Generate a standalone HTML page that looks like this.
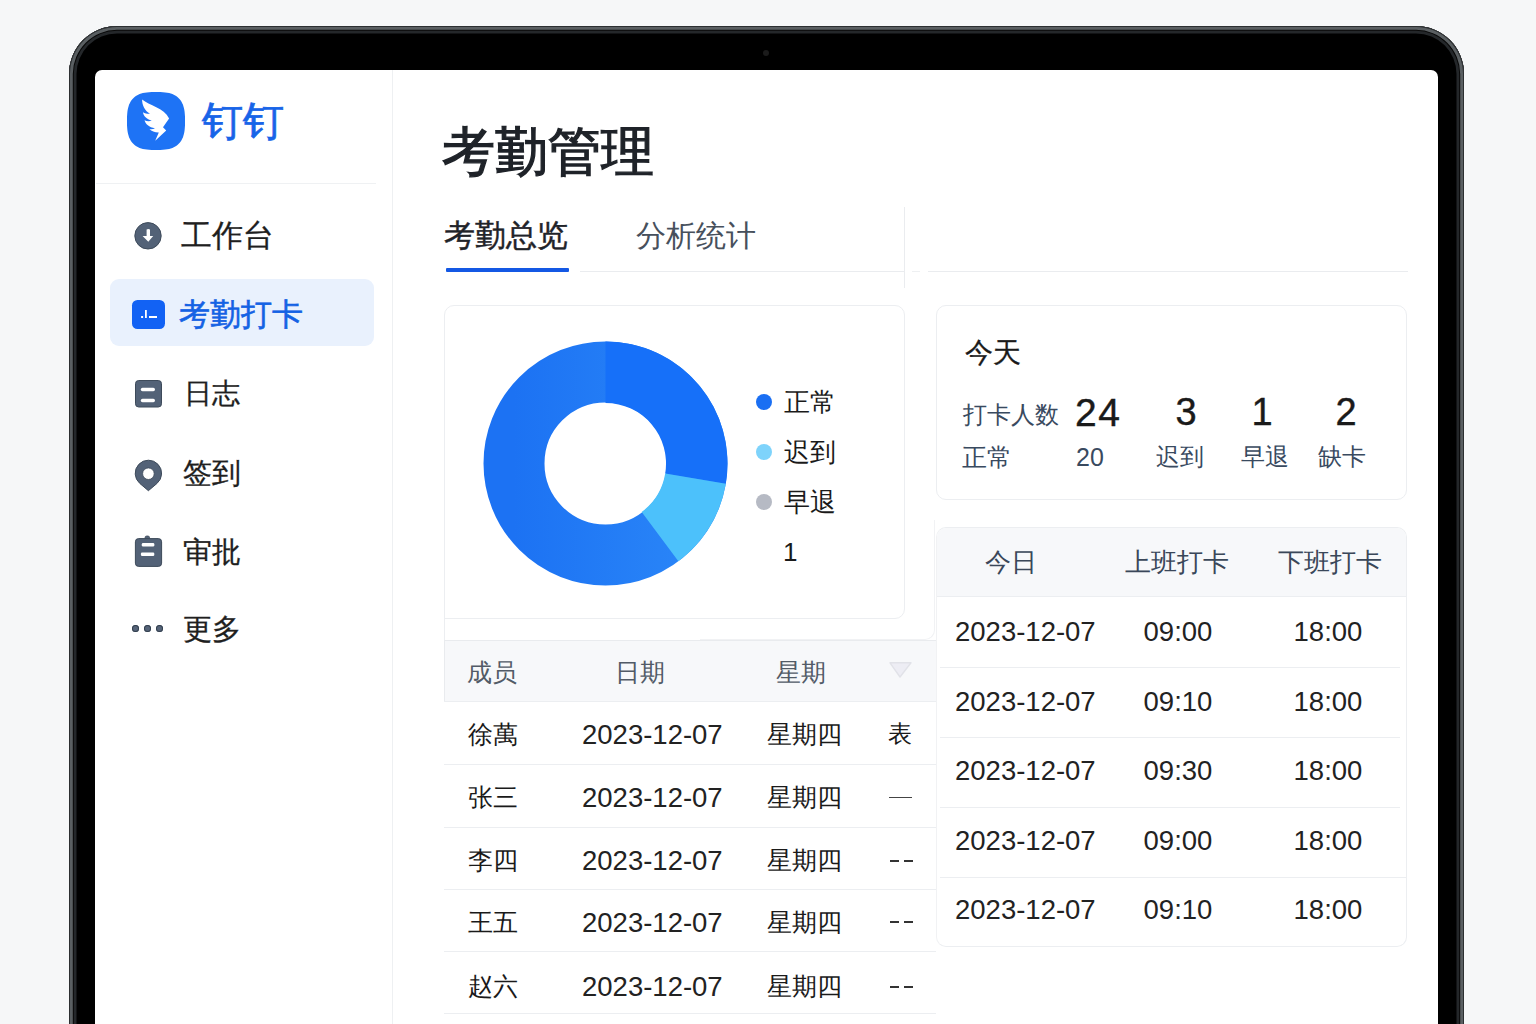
<!DOCTYPE html>
<html><head><meta charset="utf-8">
<style>
html,body{margin:0;padding:0;}
body{width:1536px;height:1024px;overflow:hidden;background:#f6f7f8;position:relative;font-family:"Liberation Sans",sans-serif;color:#1f2329;}
.abs{position:absolute;}
.t{position:absolute;white-space:nowrap;line-height:40px;height:40px;}
.c{text-align:center;width:200px;}
#bezel{left:68.6px;top:26.2px;width:1395.8px;height:1100px;border-radius:48px;background:#000;box-shadow:inset 0 0 0 1px #2c2f31,inset 0 0 0 3.8px #5a5f62,inset 0 0 0 4.8px #080808,inset 0 0 0 7.5px #24272a;}
#screen{left:94.5px;top:70px;width:1343.5px;height:1000px;border-radius:7px 7px 0 0;background:#fff;overflow:hidden;}
#cam{left:763px;top:50px;width:6px;height:6px;border-radius:3px;background:#1b1b1b;}
.line{position:absolute;background:#eceef1;}
.card{position:absolute;border:1px solid #eceef1;border-radius:10px;background:#fff;box-sizing:border-box;}
.nav{font-size:31px;color:#1f1f1f;-webkit-text-stroke:0.3px currentColor}
.hd{font-size:25px;color:#525b67;}
.cell{font-size:27.5px;color:#222;margin-top:1px}
.cj{font-size:25px;color:#1a1a1a;}
</style></head><body>
<div id="bezel" class="abs"></div>
<div id="cam" class="abs"></div>
<div id="screen" class="abs"></div>

<!-- sidebar -->
<div class="line" style="left:392px;top:70px;width:1px;height:954px;background:#eef0f2"></div>
<div class="line" style="left:96px;top:183px;width:280px;height:1px;background:#eff1f3"></div>
<svg class="abs" style="left:127px;top:92px" width="58" height="58" viewBox="0 0 58 58">
<path d="M58.0 29.0 L58.0 33.3 L57.8 35.9 L57.6 38.2 L57.3 40.2 L56.9 42.1 L56.4 43.8 L55.9 45.4 L55.2 46.8 L54.5 48.2 L53.7 49.5 L52.7 50.7 L51.7 51.7 L50.7 52.7 L49.5 53.7 L48.2 54.5 L46.8 55.2 L45.4 55.9 L43.8 56.4 L42.1 56.9 L40.2 57.3 L38.2 57.6 L35.9 57.8 L33.3 58.0 L29.0 58.0 L24.7 58.0 L22.1 57.8 L19.8 57.6 L17.8 57.3 L15.9 56.9 L14.2 56.4 L12.6 55.9 L11.2 55.2 L9.8 54.5 L8.5 53.7 L7.3 52.7 L6.3 51.7 L5.3 50.7 L4.3 49.5 L3.5 48.2 L2.8 46.8 L2.1 45.4 L1.6 43.8 L1.1 42.1 L0.7 40.2 L0.4 38.2 L0.2 35.9 L0.0 33.3 L0.0 29.0 L0.0 24.7 L0.2 22.1 L0.4 19.8 L0.7 17.8 L1.1 15.9 L1.6 14.2 L2.1 12.6 L2.8 11.2 L3.5 9.8 L4.3 8.5 L5.3 7.3 L6.3 6.3 L7.3 5.3 L8.5 4.3 L9.8 3.5 L11.2 2.8 L12.6 2.1 L14.2 1.6 L15.9 1.1 L17.8 0.7 L19.8 0.4 L22.1 0.2 L24.7 0.0 L29.0 0.0 L33.3 0.0 L35.9 0.2 L38.2 0.4 L40.2 0.7 L42.1 1.1 L43.8 1.6 L45.4 2.1 L46.8 2.8 L48.2 3.5 L49.5 4.3 L50.7 5.3 L51.7 6.3 L52.7 7.3 L53.7 8.5 L54.5 9.8 L55.2 11.2 L55.9 12.6 L56.4 14.2 L56.9 15.9 L57.3 17.8 L57.6 19.8 L57.8 22.1 L58.0 24.7Z" fill="#1e73f5"/>
<path d="M15.1 7.5 C22 13.5 37 15.5 42.1 26.6 L36 35.2 L39.2 38.4 L28.2 48.8 L31.8 40.6 C27.5 40.3 24.5 39 22.5 37.2 C24.5 37.6 26.5 37.2 28 36.2 C22 35.5 18.5 32 17.5 28.3 C20 29.5 22.5 29.5 24.8 28.6 C19.5 27 16.5 24 16 20.2 C18 21.5 20.5 22 23 21.8 C18 19 15 13 15.1 7.5 Z" fill="#fff"/>
</svg>
<div class="t" style="left:202px;top:101px;font-size:41px;line-height:40px;color:#1764e8;-webkit-text-stroke:0.7px #1764e8">钉钉</div>

<!-- nav items -->
<svg class="abs" style="left:134px;top:222px" width="28" height="28" viewBox="0 0 28 28"><circle cx="14" cy="13.8" r="13.2" fill="#536277" stroke="#3d4a5a" stroke-width="1"/><path d="M12.6 7.5 Q14.3 6.5 16 7.5 V14 H19.2 L14.3 19.8 L8.6 14 H12.6 Z" fill="#fff"/></svg>
<div class="t nav" style="left:181px;top:216px">工作台</div>

<div class="abs" style="left:110px;top:279px;width:264px;height:67px;border-radius:9px;background:#e9f1fd"></div>
<div class="abs" style="left:132px;top:300px;width:32.5px;height:29px;border-radius:5.5px;background:#1262f4"></div>
<svg class="abs" style="left:132px;top:300px" width="33" height="29" viewBox="0 0 33 29"><rect x="9.1" y="16" width="2" height="2" fill="#fff"/><rect x="13" y="10" width="1.8" height="8" fill="#fff"/><rect x="17" y="16" width="8" height="2" fill="#fff"/></svg>
<div class="t nav" style="left:179px;top:295px;color:#1462e4;-webkit-text-stroke:0.6px #1462e4">考勤打卡</div>

<svg class="abs" style="left:135px;top:380px" width="27" height="28" viewBox="0 0 27 28"><rect x="0.5" y="0.5" width="26" height="26.5" rx="3.2" fill="#536277" stroke="#3d4a5a" stroke-width="1"/><rect x="5.8" y="7.8" width="14.2" height="3.4" rx="1.7" fill="#fff"/><rect x="5.8" y="18.8" width="14.2" height="3.4" rx="1.7" fill="#fff"/></svg>
<div class="t nav" style="left:184px;top:374px;font-size:28px">日志</div>

<svg class="abs" style="left:133px;top:458px" width="31" height="35" viewBox="0 0 31 35"><path d="M15.4 32.7 L6.86 25.47 A13.2 13.2 0 1 1 23.94 25.47 Z" fill="#536277" stroke="#3d4a5a" stroke-width="1" stroke-linejoin="round"/><circle cx="15.4" cy="15.7" r="5.8" fill="#fff" stroke="#3d4a5a" stroke-width="0.8"/></svg>
<div class="t nav" style="left:183px;top:453px;font-size:29px">签到</div>

<svg class="abs" style="left:133px;top:535px" width="31" height="34" viewBox="0 0 31 34"><rect x="12" y="1" width="4.6" height="4" rx="1.8" fill="#536277" stroke="#3d4a5a" stroke-width="0.8"/><rect x="2.4" y="3.6" width="26.2" height="27.8" rx="3.2" fill="#536277" stroke="#3d4a5a" stroke-width="1"/><rect x="8.8" y="8" width="12.5" height="3.5" rx="1.2" fill="#fff"/><rect x="7.9" y="17.6" width="13.4" height="3.4" rx="1.2" fill="#fff"/></svg>
<div class="t nav" style="left:183px;top:532px;font-size:29px">审批</div>

<div class="abs" style="left:132px;top:625px;width:7px;height:7px;border-radius:4px;background:#566479;box-shadow:inset 0 0 0 1px #34404f"></div>
<div class="abs" style="left:144px;top:625px;width:7px;height:7px;border-radius:4px;background:#566479;box-shadow:inset 0 0 0 1px #34404f"></div>
<div class="abs" style="left:156px;top:625px;width:7px;height:7px;border-radius:4px;background:#566479;box-shadow:inset 0 0 0 1px #34404f"></div>
<div class="t nav" style="left:183px;top:609px;font-size:29px">更多</div>

<!-- main header -->
<div class="t" style="left:442px;top:132px;font-size:53px;color:#1f2329;-webkit-text-stroke:1.3px #1f2329">考勤管理</div>
<div class="t" style="left:444px;top:216px;font-size:31px;color:#1f2329;-webkit-text-stroke:0.45px #1f2329">考勤总览</div>
<div class="t" style="left:636px;top:216px;font-size:30px;color:#47505c">分析统计</div>
<div class="abs" style="left:445.5px;top:268.3px;width:123.5px;height:3.6px;border-radius:1px;background:#1458e4"></div>
<div class="line" style="left:580px;top:271px;width:324px;height:1px;background:#eaecef"></div><div class="line" style="left:912px;top:271px;width:8px;height:1px;background:#eef0f2"></div><div class="line" style="left:928px;top:271px;width:480px;height:1px;background:#eaecef"></div>
<div class="line" style="left:904px;top:207px;width:1px;height:81px;background:#eaecef"></div>

<!-- donut card -->
<div class="card" style="left:444px;top:305px;width:461px;height:314px;border-radius:10px 10px 10px 0"></div>
<svg class="abs" style="left:483px;top:341px" width="245" height="245" viewBox="-122.5 -122.5 245 245">
<defs><linearGradient id="g1" x1="0" y1="0" x2="1" y2="0"><stop offset="0" stop-color="#1c72f3"/><stop offset="1" stop-color="#2a86f8"/></linearGradient></defs>
<circle r="91.5" fill="none" stroke="url(#g1)" stroke-width="61"/>
<path d="M0 -122 A122 122 0 0 1 120.3 20.2 L59.7 10 A60.5 60.5 0 0 0 0 -60.5 Z" fill="#1670f9"/>
<path d="M120.3 20.2 A122 122 0 0 1 72.9 97.8 L36.2 48.5 A60.5 60.5 0 0 0 59.7 10 Z" fill="#4cc1fb"/>
</svg>
<div class="abs" style="left:756px;top:394px;width:16px;height:16px;border-radius:8px;background:#1a6ff3"></div>
<div class="abs" style="left:756px;top:444px;width:16px;height:16px;border-radius:8px;background:#7ed3fb"></div>
<div class="abs" style="left:756px;top:494px;width:16px;height:16px;border-radius:8px;background:#b6bac4"></div>
<div class="t cj" style="left:784px;top:382px;font-size:26px">正常</div>
<div class="t cj" style="left:784px;top:432px;font-size:26px">迟到</div>
<div class="t cj" style="left:784px;top:482px;font-size:26px">早退</div>
<div class="t cj" style="left:783px;top:532px;font-size:26px">1</div>

<!-- left table -->
<div class="line" style="left:444px;top:615px;width:1px;height:86px;background:#eceef1"></div>
<div class="abs" style="left:700px;top:520px;width:235px;height:120px;border-right:1px solid #f1f2f4;border-bottom:1px solid #f1f2f4;border-radius:0 0 10px 0;box-sizing:border-box"></div>
<div class="abs" style="left:444px;top:640px;width:492px;height:61px;background:#f7f8fa;border-top:1px solid #e9ebee;border-left:1px solid #e9ebee;box-sizing:border-box;border-radius:0"></div>
<div class="t hd" style="left:467px;top:652px">成员</div>
<div class="t hd" style="left:615px;top:652px">日期</div>
<div class="t hd" style="left:776px;top:652px">星期</div>
<svg class="abs" style="left:888px;top:661px" width="24" height="18" viewBox="0 0 24 18"><path d="M2 1.8 H23 L12 16 Z" fill="#ededf4" stroke="#e1e2e8" stroke-width="1.4" stroke-linejoin="round"/></svg>
<div class="line" style="left:444px;top:701px;width:492px;height:1px;background:#eceef1"></div>
<div class="line" style="left:444px;top:764px;width:492px;height:1px"></div>
<div class="line" style="left:444px;top:827px;width:492px;height:1px"></div>
<div class="line" style="left:444px;top:889px;width:492px;height:1px"></div>
<div class="line" style="left:444px;top:951px;width:492px;height:1px"></div>
<div class="line" style="left:444px;top:1013px;width:492px;height:1px"></div>

<div class="t cj" style="left:468px;top:714px">徐萬</div>
<div class="t cell" style="left:582px;top:714px">2023-12-07</div>
<div class="t cj" style="left:767px;top:714px">星期四</div>
<div class="t cj" style="left:888px;top:714px;font-size:24px">表</div>

<div class="t cj" style="left:468px;top:777px">张三</div>
<div class="t cell" style="left:582px;top:777px">2023-12-07</div>
<div class="t cj" style="left:767px;top:777px">星期四</div>
<div class="abs" style="left:889px;top:797px;width:23px;height:1.3px;background:#444"></div>

<div class="t cj" style="left:468px;top:840px">李四</div>
<div class="t cell" style="left:582px;top:840px">2023-12-07</div>
<div class="t cj" style="left:767px;top:840px">星期四</div>
<div class="abs" style="left:890px;top:860px;width:9px;height:2px;background:#333"></div><div class="abs" style="left:904px;top:860px;width:9px;height:2px;background:#333"></div>

<div class="t cj" style="left:468px;top:902px">王五</div>
<div class="t cell" style="left:582px;top:902px">2023-12-07</div>
<div class="t cj" style="left:767px;top:902px">星期四</div>
<div class="abs" style="left:890px;top:921px;width:9px;height:2px;background:#333"></div><div class="abs" style="left:904px;top:921px;width:9px;height:2px;background:#333"></div>

<div class="t cj" style="left:468px;top:966px">赵六</div>
<div class="t cell" style="left:582px;top:966px">2023-12-07</div>
<div class="t cj" style="left:767px;top:966px">星期四</div>
<div class="abs" style="left:890px;top:986px;width:9px;height:2px;background:#333"></div><div class="abs" style="left:904px;top:986px;width:9px;height:2px;background:#333"></div>

<!-- today card -->
<div class="card" style="left:936px;top:305px;width:471px;height:195px"></div>
<div class="t" style="left:965px;top:333px;font-size:28px;color:#1a1a1a;-webkit-text-stroke:0.3px #1a1a1a">今天</div>
<div class="t" style="left:963px;top:395px;font-size:24px;color:#394a5f">打卡人数</div>
<div class="t" style="left:1075px;top:393px;font-size:39px;letter-spacing:1.5px;color:#1a1a1a;-webkit-text-stroke:0.4px #1a1a1a">24</div>
<div class="t c" style="left:1086px;top:392px;font-size:38px;color:#1a1a1a;-webkit-text-stroke:0.4px #1a1a1a">3</div>
<div class="t c" style="left:1162px;top:392px;font-size:38px;color:#1a1a1a;-webkit-text-stroke:0.4px #1a1a1a">1</div>
<div class="t c" style="left:1246px;top:392px;font-size:38px;color:#1a1a1a;-webkit-text-stroke:0.4px #1a1a1a">2</div>
<div class="t" style="left:962px;top:437px;font-size:25px;color:#394a5f">正常</div>
<div class="t" style="left:1076px;top:437px;font-size:25px;color:#394a5f">20</div>
<div class="t c" style="left:1080px;top:437px;font-size:24px;color:#394a5f">迟到</div>
<div class="t c" style="left:1165px;top:437px;font-size:24px;color:#394a5f">早退</div>
<div class="t c" style="left:1242px;top:437px;font-size:24px;color:#394a5f">缺卡</div>

<!-- right table -->
<div class="card" style="left:936px;top:527px;width:471px;height:420px;overflow:hidden;border-left-color:#f1f2f4">
  <div class="abs" style="left:0;top:0;width:471px;height:69px;background:#f7f8fa"></div>
</div>
<div class="t c" style="left:911px;top:542px;font-size:26px;color:#3a4759">今日</div>
<div class="t c" style="left:1077px;top:542px;font-size:26px;color:#3a4759">上班打卡</div>
<div class="t c" style="left:1230px;top:542px;font-size:26px;color:#3a4759">下班打卡</div>
<div class="line" style="left:937px;top:596px;width:469px;height:1px"></div>
<div class="line" style="left:940px;top:667px;width:460px;height:1px"></div>
<div class="line" style="left:940px;top:737px;width:460px;height:1px"></div>
<div class="line" style="left:940px;top:807px;width:460px;height:1px"></div>
<div class="line" style="left:940px;top:877px;width:466px;height:1px"></div>

<div class="t cell" style="left:955px;top:611px">2023-12-07</div>
<div class="t cell c" style="left:1078px;top:611px">09:00</div>
<div class="t cell c" style="left:1228px;top:611px">18:00</div>
<div class="t cell" style="left:955px;top:681px">2023-12-07</div>
<div class="t cell c" style="left:1078px;top:681px">09:10</div>
<div class="t cell c" style="left:1228px;top:681px">18:00</div>
<div class="t cell" style="left:955px;top:750px">2023-12-07</div>
<div class="t cell c" style="left:1078px;top:750px">09:30</div>
<div class="t cell c" style="left:1228px;top:750px">18:00</div>
<div class="t cell" style="left:955px;top:820px">2023-12-07</div>
<div class="t cell c" style="left:1078px;top:820px">09:00</div>
<div class="t cell c" style="left:1228px;top:820px">18:00</div>
<div class="t cell" style="left:955px;top:889px">2023-12-07</div>
<div class="t cell c" style="left:1078px;top:889px">09:10</div>
<div class="t cell c" style="left:1228px;top:889px">18:00</div>

</body></html>
